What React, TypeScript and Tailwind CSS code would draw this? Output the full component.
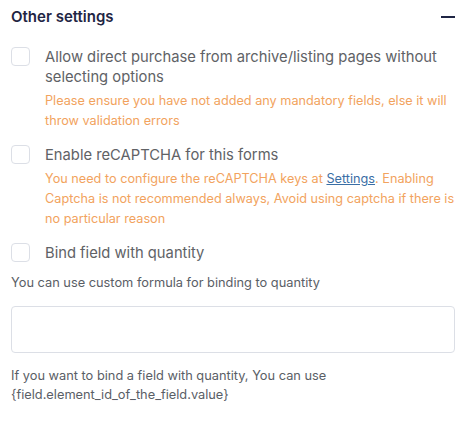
import { useState } from 'react'

function Check({ label, checked, onChange }: { label: string; checked: boolean; onChange: () => void }) {
  return (
    <label className="flex items-start gap-[15px] cursor-pointer">
      <span
        onClick={onChange}
        className={`w-[19px] h-[19px] shrink-0 rounded-[4px] border ${checked ? 'bg-[#1f2544] border-[#1f2544]' : 'bg-white border-[#dcdfe6]'}`}
      />
      <span className="text-[14.75px] leading-[20px] text-[#606266]">{label}</span>
    </label>
  )
}

export default function App() {
  const [opts, setOpts] = useState({ direct: false, captcha: false, bind: false })
  const [formula, setFormula] = useState('')
  const toggle = (k: keyof typeof opts) => setOpts((o) => ({ ...o, [k]: !o[k] }))

  return (
    <div className="bg-white w-[474px] h-[425px] pl-[11px] pr-[19px] pt-[5px] font-['Inter','Liberation_Sans',sans-serif]">
      {/* Header */}
      <div className="flex items-center justify-between h-[24px]">
        <h3 className="text-[15px] font-semibold text-[#1f2544]">Other settings</h3>
        <span className="w-[14px] h-[2px] bg-[#1f2544]" />
      </div>

      <div className="mt-[18px] space-y-[4px]">
        <Check
          label="Allow direct purchase from archive/listing pages without selecting options"
          checked={opts.direct}
          onChange={() => toggle('direct')}
        />
        <p className="pl-[34px] mr-[-6px] text-[12.7px] leading-[20px] text-[#f2a35e]">
          Please ensure you have not added any mandatory fields, else it will throw validation errors
        </p>
      </div>

      <div className="mt-[14px] space-y-[4px]">
        <Check label="Enable reCAPTCHA for this forms" checked={opts.captcha} onChange={() => toggle('captcha')} />
        <p className="pl-[34px] mr-[-18px] text-[12.7px] leading-[20px] text-[#f2a35e]">
          You need to configure the reCAPTCHA keys at{' '}
          <a href="#" className="text-[#3a6ea5] underline">
            Settings
          </a>
          . Enabling Captcha is not recommended always, Avoid using captcha if there is
          <br />
          no particular reason
        </p>
      </div>

      <div className="mt-[14px]">
        <Check label="Bind field with quantity" checked={opts.bind} onChange={() => toggle('bind')} />
      </div>

      <p className="mt-[10px] text-[12.8px] leading-[20px] text-[#5a5e66]">
        You can use custom formula for binding to quantity
      </p>
      <input
        value={formula}
        onChange={(e) => setFormula(e.target.value)}
        className="mt-[13px] block w-full h-[47px] rounded-[4px] border border-[#dcdfe6] px-3 text-sm outline-none"
      />
      <p className="mt-[13px] text-[12.8px] leading-[19px] text-[#5a5e66]">
        If you want to bind a field with quantity, You can use {'{field.element_id_of_the_field.value}'}
      </p>
    </div>
  )
}
